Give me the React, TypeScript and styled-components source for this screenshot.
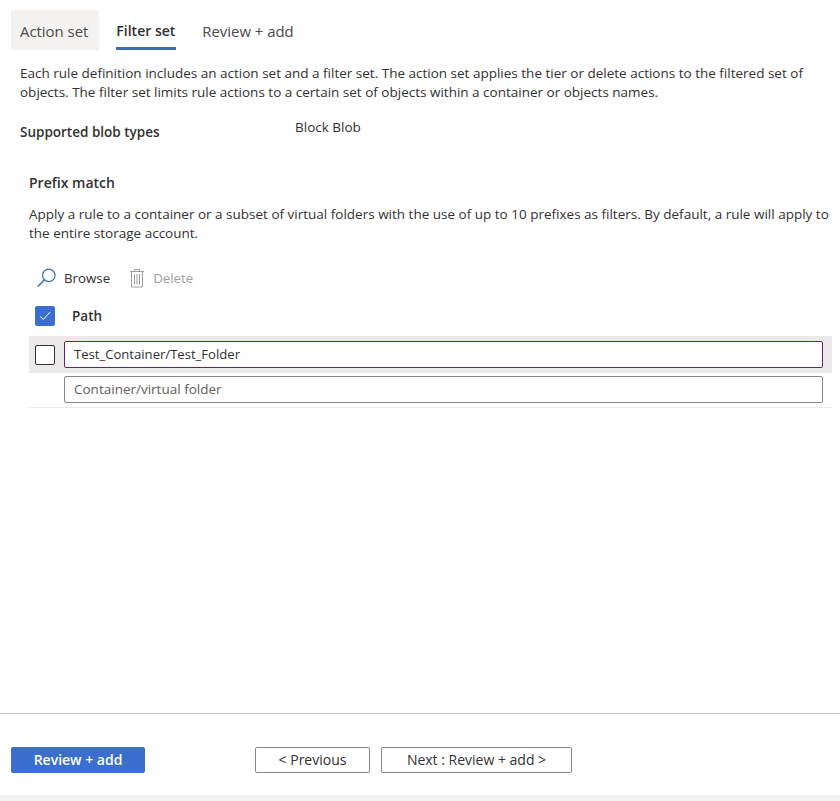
import styled, { createGlobalStyle } from "styled-components"

const GlobalStyle = createGlobalStyle`
  html, body {
    margin: 0;
    padding: 0;
    background: #fff;
  }
  body {
    font-family: "Open Sans", "Noto Sans", sans-serif;
    color: #323130;
  }
`

const Page = styled.div`
  width: 840px;
  height: 801px;
  display: flex;
  flex-direction: column;
  overflow: hidden;
`

const Main = styled.main`
  flex: 1;
  padding: 10px 0 0 11px;
`

const Tabs = styled.nav`
  display: flex;
  height: 40px;
  gap: 8px;
`

const Tab = styled.div<{ $hover?: boolean; $active?: boolean }>`
  display: flex;
  align-items: center;
  position: relative;
  padding: 1px ${(p) => (p.$hover ? 11 : p.$active ? 10 : 9)}px 0 9px;
  font-size: ${(p) => (p.$active ? 14 : 14.9)}px;
  font-weight: ${(p) => (p.$active ? 600 : 400)};
  background: ${(p) => (p.$hover ? "#f3f2f1" : "transparent")};
  color: ${(p) => (p.$active ? "#323130" : "#4a4a4a")};

  ${(p) =>
    p.$active &&
    `&::after {
      content: "";
      position: absolute;
      left: 9px;
      right: 9px;
      bottom: 0;
      height: 3px;
      background: #3f6cb5;
    }`}
`

const Intro = styled.p`
  margin: 14px 0 0 9px;
  width: 800px;
  font-size: 13.5px;
  line-height: 19px;
`

const InfoRow = styled.div`
  display: flex;
  margin: 16px 0 0 9px;
  font-size: 13.5px;
`

const InfoLabel = styled.div`
  width: 275px;
  padding-top: 5px;
  font-weight: 600;
`

const InfoValue = styled.div`
  line-height: 18px;
`

const Section = styled.section`
  margin: 32px 0 0 18px;
`

const SectionTitle = styled.h2`
  margin: 0;
  font-size: 14px;
  font-weight: 600;
  line-height: 20px;
`

const SectionText = styled.p`
  margin: 12px 0 0;
  width: 811px;
  font-size: 13.5px;
  line-height: 19px;
`

const Toolbar = styled.div`
  display: flex;
  align-items: center;
  margin: 23px 0 0 8px;
  height: 24px;
`

const ToolButton = styled.div<{ $disabled?: boolean }>`
  display: flex;
  align-items: center;
  gap: 7px;
  margin-right: 18px;
  font-size: 13.3px;
  color: ${(p) => (p.$disabled ? "#a19f9d" : "#323130")};
`

const HeaderRow = styled.div`
  display: flex;
  align-items: center;
  height: 26px;
  margin-top: 13px;
  padding-left: 6px;
  gap: 17px;
  font-size: 13.5px;
  font-weight: 600;
`

const Row = styled.div<{ $selected?: boolean; $last?: boolean }>`
  display: flex;
  align-items: ${(p) => (p.$last ? "flex-start" : "center")};
  gap: 9px;
  width: 803px;
  box-sizing: border-box;
  padding-left: 6px;
  padding-top: ${(p) => (p.$last ? 3 : 0)}px;
  height: ${(p) => (p.$selected ? 37 : 35)}px;
  background: ${(p) => (p.$selected ? "#ebe9e9" : "transparent")};
  border-bottom: ${(p) => (p.$last ? "1px solid #edebe9" : "none")};
`

const RowsWrap = styled.div`
  margin-top: 7px;
`

const CheckBox = styled.span<{ $checked?: boolean; $hidden?: boolean }>`
  display: flex;
  align-items: center;
  justify-content: center;
  box-sizing: border-box;
  width: 20px;
  height: 20px;
  border-radius: 2px;
  border: 1px solid ${(p) => (p.$checked ? "#3a6fd0" : "#323130")};
  background: ${(p) => (p.$checked ? "#3a6fd0" : "#fff")};
  visibility: ${(p) => (p.$hidden ? "hidden" : "visible")};
`

const PathField = styled.div<{ $focused?: boolean }>`
  box-sizing: border-box;
  width: 759px;
  height: 27px;
  padding: 0 9px 2px;
  display: flex;
  align-items: center;
  background: #fff;
  border-radius: 2px;
  border: 1px solid ${(p) => (p.$focused ? "#6b1f7c" : "#8a8886")};
  font-size: ${(p) => (p.$focused ? 13.1 : 13.5)}px;
  color: ${(p) => (p.$focused ? "#323130" : "#605e5c")};
`

const Footer = styled.footer`
  height: 82px;
  border-top: 1px solid #c4c4c4;
  box-sizing: border-box;
  padding: 33px 0 0 11px;
  display: flex;
  align-items: flex-start;
`

const Button = styled.button<{ $primary?: boolean; $width: number }>`
  box-sizing: border-box;
  width: ${(p) => p.$width}px;
  height: 26px;
  padding: 0 0 2px;
  border-radius: 2px;
  font-family: inherit;
  font-size: 14px;
  font-weight: ${(p) => (p.$primary ? 600 : 400)};
  border: 1px solid ${(p) => (p.$primary ? "#3a6fd0" : "#8a8886")};
  background: ${(p) => (p.$primary ? "#3a6fd0" : "#fff")};
  color: ${(p) => (p.$primary ? "#fff" : "#323130")};
`

const ButtonGroup = styled.div`
  display: flex;
  gap: 11px;
  margin-left: 110px;
`

const BottomStrip = styled.div`
  height: 6px;
  background: #f3f2f1;
`

const SearchIcon = () => (
  <svg width="20" height="20" viewBox="0 0 20 20" fill="none" stroke="#3f6cb5" strokeWidth="1.2">
    <circle cx="11.8" cy="7.4" r="6.2" />
    <path d="M7.4 11.8 1.4 18" strokeWidth="1.6" strokeLinecap="round" />
  </svg>
)

const TrashIcon = () => (
  <svg width="18" height="20" viewBox="0 0 18 20" fill="none" stroke="#a19f9d" strokeWidth="1">
    <path d="M2 3.5h14M6.5 3.5V1.5h5v2M3.5 3.5v15.5h11V3.5M6.5 6v10.5M9 6v10.5M11.5 6v10.5" />
  </svg>
)

const CheckMark = () => (
  <svg width="12" height="10" viewBox="0 0 12 10" fill="none" stroke="#fff" strokeWidth="1">
    <path d="M1 5.2 4.2 8.5 11 1.2" />
  </svg>
)

const App = () => (
  <>
    <GlobalStyle />
    <Page>
      <Main>
        <Tabs>
          <Tab $hover>Action set</Tab>
          <Tab $active>Filter set</Tab>
          <Tab>Review + add</Tab>
        </Tabs>
        <Intro>
          Each rule definition includes an action set and a filter set. The action set applies the tier or delete
          actions to the filtered set of objects. The filter set limits rule actions to a certain set of objects
          within a container or objects names.
        </Intro>
        <InfoRow>
          <InfoLabel>Supported blob types</InfoLabel>
          <InfoValue>Block Blob</InfoValue>
        </InfoRow>
        <Section>
          <SectionTitle>Prefix match</SectionTitle>
          <SectionText>
            Apply a rule to a container or a subset of virtual folders with the use of up to 10 prefixes as filters.
            By default, a rule will apply to the entire storage account.
          </SectionText>
          <Toolbar>
            <ToolButton>
              <SearchIcon />
              Browse
            </ToolButton>
            <ToolButton $disabled>
              <TrashIcon />
              Delete
            </ToolButton>
          </Toolbar>
          <HeaderRow>
            <CheckBox $checked>
              <CheckMark />
            </CheckBox>
            Path
          </HeaderRow>
          <RowsWrap>
            <Row $selected>
              <CheckBox />
              <PathField $focused>Test_Container/Test_Folder</PathField>
            </Row>
            <Row $last>
              <CheckBox $hidden />
              <PathField>Container/virtual folder</PathField>
            </Row>
          </RowsWrap>
        </Section>
      </Main>
      <Footer>
        <Button $primary $width={134}>Review + add</Button>
        <ButtonGroup>
          <Button $width={115}>&lt; Previous</Button>
          <Button $width={191}>Next : Review + add &gt;</Button>
        </ButtonGroup>
      </Footer>
      <BottomStrip />
    </Page>
  </>
)

export default App
